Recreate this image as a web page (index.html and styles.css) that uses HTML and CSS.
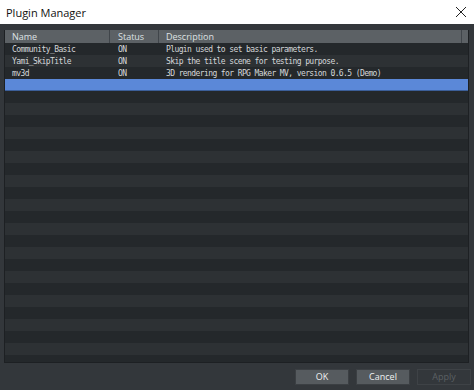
FILE: index.html
```html
<!DOCTYPE html>
<html lang="en">
<head>
    <meta charset="UTF-8">
    <title>Plugin Manager</title>
    <link rel="stylesheet" href="styles.css">
</head>
<body>
    <div class="titlebar">
        <span class="title">Plugin Manager</span>
        <svg class="close" width="12" height="12" viewBox="0 0 12 12">
            <path d="M1 1 L11 11 M11 1 L1 11" stroke="#222" stroke-width="1" fill="none"/>
        </svg>
    </div>

    <div class="dialog">
        <div class="table">
            <div class="head">
                <div class="cell c-name">Name</div>
                <div class="cell c-status">Status</div>
                <div class="cell c-desc">Description</div>
                <div class="cell c-fill"></div>
            </div>
            <div class="body">
                <div class="row"><div class="c-name">Community_Basic</div><div class="c-status">ON</div><div class="c-desc">Plugin used to set basic parameters.</div></div>
                <div class="row"><div class="c-name">Yami_SkipTitle</div><div class="c-status">ON</div><div class="c-desc">Skip the title scene for testing purpose.</div></div>
                <div class="row"><div class="c-name">mv3d</div><div class="c-status">ON</div><div class="c-desc">3D rendering for RPG Maker MV, version 0.6.5 (Demo)</div></div>
                <div class="row selected"></div>
                <div class="row"></div><div class="row"></div><div class="row"></div><div class="row"></div>
                <div class="row"></div><div class="row"></div><div class="row"></div><div class="row"></div>
                <div class="row"></div><div class="row"></div><div class="row"></div><div class="row"></div>
                <div class="row"></div><div class="row"></div><div class="row"></div><div class="row"></div>
                <div class="row"></div><div class="row"></div><div class="row"></div><div class="row"></div>
                <div class="row"></div><div class="row"></div><div class="row"></div>
            </div>
        </div>

        <div class="buttons">
            <button>OK</button>
            <button>Cancel</button>
            <button disabled>Apply</button>
        </div>
    </div>
</body>
</html>
```

FILE: styles.css
```css
html, body {
    margin: 0;
    height: 100%;
}
body {
    display: flex;
    flex-direction: column;
    font-family: "Open Sans", "Noto Sans", sans-serif;
    background: #33373b;
    overflow: hidden;
}
.titlebar {
    height: 24px;
    background: #fff;
    display: flex;
    align-items: center;
    justify-content: space-between;
    padding: 0 7px 0 6px;
    flex-shrink: 0;
}
.title {
    font-size: 11px;
    color: #111;
}
.dialog {
    flex: 1;
    display: flex;
    flex-direction: column;
    padding: 6px 5px 0 4px;
    min-height: 0;
}
.table {
    height: 332px;
    border: 1px solid #1d2023;
    border-top: none;
    background: #25292c;
    display: flex;
    flex-direction: column;
    overflow: hidden;
}
.head {
    display: flex;
    height: 13px;
    background: #5c6165;
    flex-shrink: 0;
}
.head .cell {
    font-size: 9px;
    line-height: 13px;
    color: #dfe2e4;
    border-right: 1px solid #40454a;
    box-sizing: border-box;
}
.c-name {
    width: 105px;
    padding-left: 7px;
}
.c-status {
    width: 49px;
    padding-left: 8px;
}
.c-desc {
    width: 303px;
    padding-left: 7px;
}
.c-fill {
    flex: 1;
}
.head .c-fill {
    border-right: none;
}
.body {
    flex: 1;
    overflow: hidden;
}
.row {
    display: flex;
    height: 12px;
    font-family: "DejaVu Sans Mono", monospace;
    font-size: 8px;
    letter-spacing: -0.6px;
    line-height: 13px;
    color: #d4d7d9;
    white-space: nowrap;
    background: #24282b;
    box-sizing: border-box;
}
.row > div {
    box-sizing: border-box;
}
.row:nth-child(even) {
    background: #2d3134;
}
.row.selected {
    background: #5b88d8;
    border-bottom: 1px solid #3c5f99;
}
.buttons {
    display: flex;
    justify-content: flex-end;
    gap: 7px;
    padding: 6px 3px 0 0;
    margin-right: -5px;
}
button {
    width: 54px;
    height: 16px;
    padding: 0;
    background: #565b5f;
    border: 1px solid #3b3f43;
    color: #eef0f1;
    font-family: "Open Sans", "Noto Sans", sans-serif;
    font-size: 9px;
    line-height: 14px;
}
button:disabled {
    background: #33373b;
    color: #5b6064;
    border-color: #3e4246;
}
```
